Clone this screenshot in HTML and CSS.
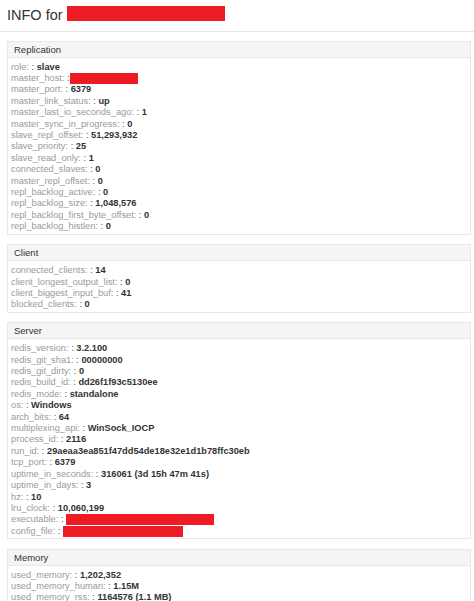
FILE: index.html
```html
<!DOCTYPE html>
<html lang="en">
<head>
<meta charset="utf-8">
<title>INFO</title>
<link rel="stylesheet" href="styles.css">
</head>
<body>
<header class="page-header">
  <h1 class="title">INFO for <span class="redact redact-title"></span></h1>
</header>
<main class="content">
  <section class="panel">
    <div class="panel-heading">Replication</div>
    <div class="panel-body">
      <div class="row"><span class="key">role:</span> : <b>slave</b></div>
      <div class="row"><span class="key">master_host:</span> : <span class="redact redact-host"></span></div>
      <div class="row"><span class="key">master_port:</span> : <b>6379</b></div>
      <div class="row"><span class="key">master_link_status:</span> : <b>up</b></div>
      <div class="row"><span class="key">master_last_io_seconds_ago:</span> : <b>1</b></div>
      <div class="row"><span class="key">master_sync_in_progress:</span> : <b>0</b></div>
      <div class="row"><span class="key">slave_repl_offset:</span> : <b>51,293,932</b></div>
      <div class="row"><span class="key">slave_priority:</span> : <b>25</b></div>
      <div class="row"><span class="key">slave_read_only:</span> : <b>1</b></div>
      <div class="row"><span class="key">connected_slaves:</span> : <b>0</b></div>
      <div class="row"><span class="key">master_repl_offset:</span> : <b>0</b></div>
      <div class="row"><span class="key">repl_backlog_active:</span> : <b>0</b></div>
      <div class="row"><span class="key">repl_backlog_size:</span> : <b>1,048,576</b></div>
      <div class="row"><span class="key">repl_backlog_first_byte_offset:</span> : <b>0</b></div>
      <div class="row"><span class="key">repl_backlog_histlen:</span> : <b>0</b></div>
    </div>
  </section>
  <section class="panel">
    <div class="panel-heading">Client</div>
    <div class="panel-body">
      <div class="row"><span class="key">connected_clients:</span> : <b>14</b></div>
      <div class="row"><span class="key">client_longest_output_list:</span> : <b>0</b></div>
      <div class="row"><span class="key">client_biggest_input_buf:</span> : <b>41</b></div>
      <div class="row"><span class="key">blocked_clients:</span> : <b>0</b></div>
    </div>
  </section>
  <section class="panel">
    <div class="panel-heading">Server</div>
    <div class="panel-body">
      <div class="row"><span class="key">redis_version:</span> : <b>3.2.100</b></div>
      <div class="row"><span class="key">redis_git_sha1:</span> : <b>00000000</b></div>
      <div class="row"><span class="key">redis_git_dirty:</span> : <b>0</b></div>
      <div class="row"><span class="key">redis_build_id:</span> : <b>dd26f1f93c5130ee</b></div>
      <div class="row"><span class="key">redis_mode:</span> : <b>standalone</b></div>
      <div class="row"><span class="key">os:</span> : <b>Windows</b></div>
      <div class="row"><span class="key">arch_bits:</span> : <b>64</b></div>
      <div class="row"><span class="key">multiplexing_api:</span> : <b>WinSock_IOCP</b></div>
      <div class="row"><span class="key">process_id:</span> : <b>2116</b></div>
      <div class="row"><span class="key">run_id:</span> : <b>29aeaa3ea851f47dd54de18e32e1d1b78ffc30eb</b></div>
      <div class="row"><span class="key">tcp_port:</span> : <b>6379</b></div>
      <div class="row"><span class="key">uptime_in_seconds:</span> : <b>316061 (3d 15h 47m 41s)</b></div>
      <div class="row"><span class="key">uptime_in_days:</span> : <b>3</b></div>
      <div class="row"><span class="key">hz:</span> : <b>10</b></div>
      <div class="row"><span class="key">lru_clock:</span> : <b>10,060,199</b></div>
      <div class="row"><span class="key">executable:</span> : <span class="redact redact-exe"></span></div>
      <div class="row"><span class="key">config_file:</span> : <span class="redact redact-config"></span></div>
    </div>
  </section>
  <section class="panel">
    <div class="panel-heading">Memory</div>
    <div class="panel-body">
      <div class="row"><span class="key">used_memory:</span> : <b>1,202,352</b></div>
      <div class="row"><span class="key">used_memory_human:</span> : <b>1.15M</b></div>
      <div class="row"><span class="key">used_memory_rss:</span> : <b>1164576 (1.1 MB)</b></div>
    </div>
  </section>
</main>
</body>
</html>
```

FILE: styles.css
```css
html, body {
  margin: 0;
  padding: 0;
  background: #ffffff;
}

body {
  font-family: "Liberation Sans", Arial, sans-serif;
  color: #333333;
  overflow: hidden;
}

.page-header {
  height: 31px;
  border-bottom: 1px solid #e6e6e6;
  padding-left: 7px;
}

.title {
  margin: 0;
  font-size: 14.5px;
  line-height: 31px;
  font-weight: normal;
  color: #333333;
}

.redact {
  display: inline-block;
  background: #ed1c24;
}

.redact-title {
  width: 158px;
  height: 15px;
  vertical-align: -1px;
}

.redact-host,
.redact-exe,
.redact-config {
  height: 11px;
  vertical-align: top;
}

.redact-host { width: 68px; margin-left: -2px; }
.redact-exe { width: 148px; }
.redact-config { width: 120px; }

.content {
  padding: 8.5px 3px 0 7px;
}

.panel {
  border: 1px solid #e8e8e8;
  margin-bottom: 9.5px;
  background: #ffffff;
}

.panel-heading {
  height: 15px;
  line-height: 16px;
  padding: 0 6px;
  background: #f5f5f5;
  border-bottom: 1px solid #e8e8e8;
  font-size: 9.5px;
  color: #333333;
}

.panel-body {
  padding: 4px 3px 1px 3px;
}

.row {
  font-size: 9.25px;
  line-height: 11.4px;
  white-space: nowrap;
  color: #555555;
}

.key {
  color: #9a9a9a;
}

.row b {
  font-weight: bold;
  color: #333333;
}
```
